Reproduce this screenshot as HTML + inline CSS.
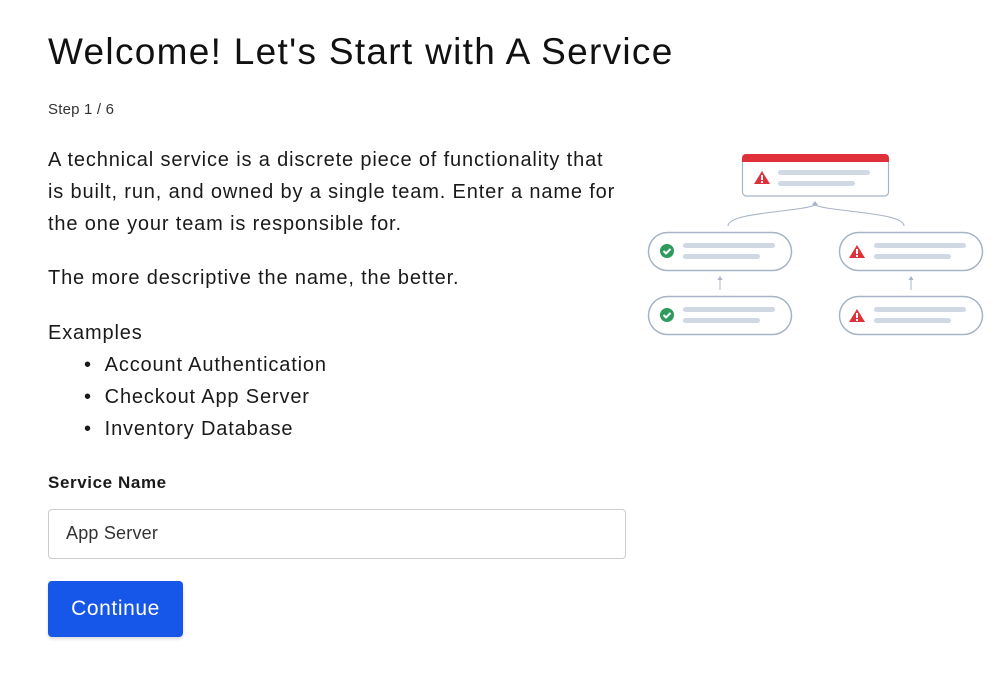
<!DOCTYPE html>
<html><head><meta charset="utf-8"><style>
html,body{margin:0;padding:0;background:#fff;}
body{width:1000px;height:684px;position:relative;overflow:hidden;font-family:"Liberation Sans",sans-serif;color:#1a1a1a;}
.a{position:absolute;white-space:nowrap;}
h1{position:absolute;left:48px;top:28px;margin:0;font-size:37px;font-weight:400;line-height:48px;color:#111;letter-spacing:1.3px;}
.step{left:48px;top:101px;font-size:15px;color:#333;letter-spacing:0.2px;}
.p{left:48px;font-size:20px;line-height:32px;letter-spacing:0.85px;}
.label{left:48px;top:473px;font-size:17px;font-weight:700;letter-spacing:0.6px;}
.input{position:absolute;left:48px;top:509px;width:576px;height:48px;border:1px solid #ccc;border-radius:4px;box-sizing:content-box;}
.input span{position:absolute;left:17px;top:13px;font-size:18px;color:#333;letter-spacing:0.2px;}
.btn{position:absolute;left:48px;top:581px;width:135px;height:56px;background:#1656e8;border-radius:4px;color:#fff;font-size:21px;text-align:center;line-height:56px;box-shadow:0 2px 3px rgba(0,0,0,0.15);letter-spacing:0.6px;}
</style></head><body>
<h1>Welcome! Let's Start with A Service</h1>
<div class="a step">Step 1 / 6</div>
<div class="a p" style="top:144px">A technical service is a discrete piece of functionality that<br>is built, run, and owned by a single team. Enter a name for<br>the one your team is responsible for.</div>
<div class="a p" style="top:262px">The more descriptive the name, the better.</div>
<div class="a p" style="top:317px">Examples</div>
<div class="a p" style="top:349px;left:84px">•&nbsp;&nbsp;Account Authentication<br>•&nbsp;&nbsp;Checkout App Server<br>•&nbsp;&nbsp;Inventory Database</div>
<div class="a label">Service Name</div>
<div class="input"><span>App Server</span></div>
<div class="btn">Continue</div>
<svg class="a" style="left:0;top:0" width="1000" height="684">
<defs>
<g id="warn"><path d="M0,-7 L8,6 L-8,6 Z" fill="#e0313a"/><rect x="-1" y="-3" width="2" height="5" fill="#fff"/><rect x="-1" y="3" width="2" height="2" fill="#fff"/></g>
<g id="ok"><circle r="7" fill="#2e9a5c"/><path d="M-3.5,0 L-1,2.5 L3.5,-2" stroke="#fff" stroke-width="2" fill="none"/></g>
<g id="lines"><rect x="0" y="-8" width="92" height="5" rx="2.5" fill="#cfd8e3"/><rect x="0" y="3" width="77" height="5" rx="2.5" fill="#cfd8e3"/></g>
</defs>
<rect x="742.5" y="155" width="146" height="41" rx="4" fill="#fff" stroke="#a7b4c6" stroke-width="1.2"/>
<path d="M742,162 V158 a4,4 0 0 1 4,-4 H885 a4,4 0 0 1 4,4 V162 Z" fill="#e0313a"/>
<use href="#warn" x="762" y="178"/>
<use href="#lines" x="778" y="178"/>
<path d="M728,226 C728,212 800,212 815,205 C830,212 904,212 904,226" stroke="#a7b4c6" fill="none" stroke-width="1"/>
<path d="M812,205 L815,201 L818,205 Z" fill="#a7b4c6"/>
<g fill="#fff" stroke="#a7b4c6" stroke-width="1.5">
<rect x="648.5" y="232.5" width="143" height="38" rx="19"/>
<rect x="648.5" y="296.5" width="143" height="38" rx="19"/>
<rect x="839.5" y="232.5" width="143" height="38" rx="19"/>
<rect x="839.5" y="296.5" width="143" height="38" rx="19"/>
</g>
<g stroke="#a7b4c6" stroke-width="1"><line x1="720" y1="278" x2="720" y2="290"/><line x1="911" y1="278" x2="911" y2="290"/></g>
<path d="M717.5,280 L720,276 L722.5,280 Z M908.5,280 L911,276 L913.5,280 Z" fill="#a7b4c6"/>
<use href="#ok" x="667" y="251"/><use href="#lines" x="683" y="251"/>
<use href="#ok" x="667" y="315"/><use href="#lines" x="683" y="315"/>
<use href="#warn" x="857" y="252"/><use href="#lines" x="874" y="251"/>
<use href="#warn" x="857" y="316"/><use href="#lines" x="874" y="315"/>
</svg>
</body></html>
